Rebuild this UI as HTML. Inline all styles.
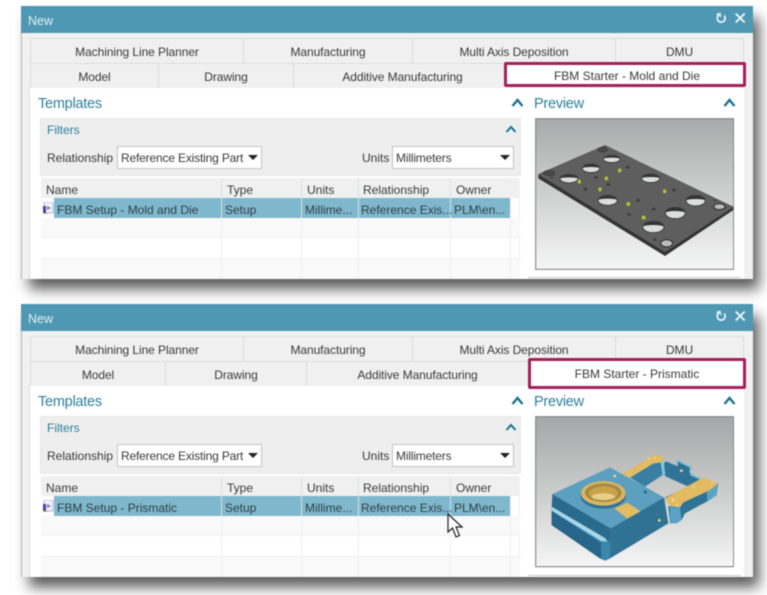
<!DOCTYPE html>
<html><head><meta charset="utf-8"><style>
html,body{margin:0;padding:0;background:#fff}
#p{position:relative;width:767px;height:595px;overflow:hidden;background:#fff;font-family:"Liberation Sans",sans-serif;font-size:12px;color:#3a3a3a;filter:blur(.4px)}
.d{position:absolute;left:0;width:767px;height:273px}
.d div,.d svg,.d span{position:absolute}
.w{left:21px;top:6px;width:732px;height:273px;background:#f1f1f1;box-shadow:7px 11px 13px -1px rgba(0,0,0,.65)}
.edge{left:21px;top:33px;width:1px;height:246px;background:#b5b5b5}
.tb{left:21px;top:6px;width:732px;height:27px;background:#4f98b3}
.tt{left:28px;top:14px;color:#e2f1f5;font-size:12.5px;line-height:14px}
.tab{height:24px;background:#f0f0f0;border:1px solid #dcdcdc;border-bottom:0;text-align:center;line-height:26px;white-space:nowrap;letter-spacing:-.08px}
.pn{left:29px;top:88px;width:715px;height:191px;background:#fff;border-left:1px solid #ddd;box-sizing:border-box}
.sel{background:#fff;border:3px solid #a3205c;box-sizing:border-box;text-align:center;border-radius:2px;white-space:nowrap}
.h{color:#2c7f9c;font-size:14.5px;line-height:18px;top:95px;letter-spacing:-.25px}
.f{left:40px;top:118px;width:481px;height:58px;background:#eee;border:1px solid #e8e8e8;box-sizing:border-box}
.l{line-height:14px;white-space:nowrap}
.s{top:146px;height:23px;background:#fff;border:1px solid #c4c4c4;box-sizing:border-box;line-height:22px;padding-left:3px;white-space:nowrap;letter-spacing:-.17px}
.ar{width:0;height:0;border-left:5px solid transparent;border-right:5px solid transparent;border-top:5px solid #222}
.t{left:41px;top:178px;width:479px;height:101px;background:#fff;border-right:1px solid #eee;box-sizing:border-box}
.hd{left:41px;top:178px;width:479px;height:20px;background:#f0f0f0}
.r{left:54px;top:198px;width:456px;height:20px;background:#7fb8cc}
.r1{left:41px;top:218px;width:479px;height:20px;background:#f9f9f9;border-bottom:1px solid #f0f0f0;box-sizing:border-box}
.r2{left:41px;top:258px;width:479px;height:21px;background:#f9f9f9;border-top:1px solid #f0f0f0;box-sizing:border-box}
.v{top:178px;width:1px;height:101px;background:#efefef}
.vw{top:178px;width:1px;height:40px;background:#d8e2e6}
.c{top:203px;line-height:14px;color:#2f3f46;white-space:nowrap}
.hc{top:183px;line-height:14px;white-space:nowrap;color:#3a3a3a}
.bl{left:528px;top:277px;width:213px;height:1px;background:#ccc}
</style></head><body><div id="p">

<div class="d" style="top:0">
<div class="w"></div><div class="edge"></div><div class="tb"></div><div class="tt">New</div>
<svg style="left:714px;top:11px" width="34" height="14" viewBox="0 0 34 14" fill="none" stroke="#eef7f9" stroke-width="1.700"><path d="M5 3.800A4 4 0 1 0 10.200 4.500"/><path d="M2.500 3.500L6 2.500 6.500 6" stroke-width="1.300"/><path d="M21.700 2.500l9 9M30.700 2.500l-9 9" stroke-width="1.900"/></svg>

<div class="tab" style="left:30px;top:38px;width:212px">Machining Line Planner</div>
<div class="tab" style="left:243px;top:38px;width:168px">Manufacturing</div>
<div class="tab" style="left:412px;top:38px;width:202px">Multi Axis Deposition</div>
<div class="tab" style="left:615px;top:38px;width:127px">DMU</div>
<div class="tab" style="left:30px;top:63px;width:127px">Model</div>
<div class="tab" style="left:158px;top:63px;width:134px">Drawing</div>
<div class="tab" style="left:293px;top:63px;width:217px">Additive Manufacturing</div>
<div class="pn"></div>
<div class="sel" style="left:504px;top:62px;width:242px;height:25px;line-height:22px;padding-left:4px">FBM Starter - Mold and Die</div>

<div class="h" style="left:38px">Templates</div>
<svg style="left:511px;top:97px" width="14" height="11" fill="none" stroke="#1c7391" stroke-width="2.400"><path d="M1.500 9L6.500 3l5 6"/></svg>
<div class="h" style="left:534px">Preview</div>
<svg style="left:723px;top:97px" width="14" height="11" fill="none" stroke="#1c7391" stroke-width="2.400"><path d="M1.500 9L6.500 3l5 6"/></svg>
<div class="f"></div>
<div class="l" style="left:47px;top:123px;color:#2c7f9c">Filters</div>
<svg style="left:505px;top:124px" width="12" height="10" fill="none" stroke="#1c7391" stroke-width="2"><path d="M1.500 8L6 3l4.500 5"/></svg>
<div class="l" style="left:47px;top:151px">Relationship</div>
<div class="s" style="left:117px;width:145px">Reference Existing Part</div><div class="ar" style="left:248px;top:155px"></div>
<div class="l" style="left:362px;top:151px">Units</div>
<div class="s" style="left:392px;width:122px">Millimeters</div><div class="ar" style="left:500px;top:155px"></div>

<div class="t"></div><div class="hd"></div><div class="r"></div><div class="r1"></div><div class="r2"></div>
<div class="v" style="left:221px"></div><div class="v" style="left:301px"></div><div class="v" style="left:358px"></div><div class="v" style="left:450px"></div><div class="v" style="left:510px"></div>
<div class="vw" style="left:221px"></div><div class="vw" style="left:301px"></div><div class="vw" style="left:358px"></div><div class="vw" style="left:450px"></div>
<div class="hc" style="left:46px">Name</div><div class="hc" style="left:227px">Type</div><div class="hc" style="left:307px">Units</div><div class="hc" style="left:363px">Relationship</div><div class="hc" style="left:456px">Owner</div>
<svg style="left:42px;top:202px" width="12" height="14"><rect x="2" y="0" width="9" height="11" fill="#eef0fa" stroke="#9a9ad0" stroke-width=".7"/><rect x="1" y="4" width="3" height="7" fill="#5040a0"/><path d="M5 4l4 2-4 2z" fill="#7a7a9a"/><rect x="1" y="11" width="5" height="1" fill="#d8c040"/></svg>
<div class="c" style="left:57px">FBM Setup - Mold and Die</div><div class="c" style="left:225px">Setup</div><div class="c" style="left:305px">Millime...</div><div class="c" style="left:361px">Reference Exis...</div><div class="c" style="left:454px">PLM\en...</div>

<svg style="left:535px;top:118px" width="199" height="152" viewBox="45 24 597 456">
<defs><linearGradient id="g1" x1="0" y1="0" x2="0" y2="1"><stop offset="0" stop-color="#a9aaab"/><stop offset=".5" stop-color="#cfd0d0"/><stop offset="1" stop-color="#f6f6f6"/></linearGradient></defs>
<rect x="47" y="26" width="594" height="452" fill="url(#g1)" stroke="#7c7c7c" stroke-width="3"/>
<path d="M55 192V205L435 438 640 300V290L435 425Z" fill="#343434"/>
<path d="M255 105L640 290 435 425 55 192Z" fill="#5e5e5e"/>
<g fill="#dcdddd" stroke="#3f3f3f" stroke-width="3">
<ellipse cx="275" cy="147" rx="25" ry="11"/><ellipse cx="213" cy="175" rx="26" ry="13"/><ellipse cx="147" cy="206" rx="27" ry="13"/><ellipse cx="392" cy="205" rx="27" ry="13"/><ellipse cx="263" cy="271" rx="29" ry="15"/><ellipse cx="527" cy="272" rx="29" ry="16"/><ellipse cx="466" cy="309" rx="30" ry="17"/><ellipse cx="400" cy="351" rx="32" ry="17"/>
</g>
<g fill="#333"><path d="M250 147a25 11 0 0 1 50 0 25 4 0 0 0-50 0z"/><path d="M187 175a26 13 0 0 1 52 0 26 4 0 0 0-52 0z"/><path d="M120 206a27 13 0 0 1 54 0 27 4 0 0 0-54 0z"/><path d="M365 205a27 13 0 0 1 54 0 27 4 0 0 0-54 0z"/><path d="M234 271a29 15 0 0 1 58 0 29 5 0 0 0-58 0z"/><path d="M498 272a29 16 0 0 1 58 0 29 5 0 0 0-58 0z"/><path d="M436 309a30 17 0 0 1 60 0 30 6 0 0 0-60 0z"/><path d="M368 351a32 17 0 0 1 64 0 32 6 0 0 0-64 0z"/></g>
<g fill="#4a4a4a" stroke="#333" stroke-width="2"><ellipse cx="248" cy="119" rx="14" ry="7"/><ellipse cx="87" cy="189" rx="17" ry="8"/></g>
<g fill="#bbb" stroke="#333" stroke-width="3.500"><ellipse cx="598" cy="290" rx="17" ry="9"/><ellipse cx="440" cy="400" rx="18" ry="11"/></g>
<g fill="#b9c232"><ellipse cx="299" cy="181" rx="5" ry="6"/><ellipse cx="178" cy="215" rx="5" ry="6"/><ellipse cx="259" cy="205" rx="5" ry="6"/><ellipse cx="240" cy="238" rx="5" ry="6"/><ellipse cx="434" cy="244" rx="5" ry="6"/><ellipse cx="325" cy="282" rx="6" ry="6"/><ellipse cx="371" cy="323" rx="6" ry="6"/></g>
<g fill="#3c3c3c"><ellipse cx="323" cy="172" rx="6" ry="4"/><ellipse cx="228" cy="202" rx="6" ry="4"/><ellipse cx="265" cy="223" rx="6" ry="4"/><ellipse cx="196" cy="237" rx="6" ry="4"/><ellipse cx="462" cy="240" rx="6" ry="4"/><ellipse cx="354" cy="271" rx="6" ry="4"/><ellipse cx="401" cy="297" rx="6" ry="4"/><ellipse cx="327" cy="313" rx="6" ry="4"/><ellipse cx="404" cy="389" rx="5" ry="4"/><ellipse cx="95" cy="203" rx="4" ry="3"/><ellipse cx="585" cy="272" rx="4" ry="3"/></g>
</svg>
<div class="bl"></div>
</div>

<div class="d" style="top:298px">
<div class="w"></div><div class="edge"></div><div class="tb"></div><div class="tt">New</div>
<svg style="left:714px;top:11px" width="34" height="14" viewBox="0 0 34 14" fill="none" stroke="#eef7f9" stroke-width="1.700"><path d="M5 3.800A4 4 0 1 0 10.200 4.500"/><path d="M2.500 3.500L6 2.500 6.500 6" stroke-width="1.300"/><path d="M21.700 2.500l9 9M30.700 2.500l-9 9" stroke-width="1.900"/></svg>

<div class="tab" style="left:30px;top:38px;width:212px">Machining Line Planner</div>
<div class="tab" style="left:243px;top:38px;width:168px">Manufacturing</div>
<div class="tab" style="left:412px;top:38px;width:202px">Multi Axis Deposition</div>
<div class="tab" style="left:615px;top:38px;width:127px">DMU</div>
<div class="tab" style="left:30px;top:63px;width:134px">Model</div>
<div class="tab" style="left:165px;top:63px;width:140px">Drawing</div>
<div class="tab" style="left:306px;top:63px;width:221px">Additive Manufacturing</div>
<div class="pn"></div>
<div class="sel" style="left:528px;top:60px;width:218px;height:31px;line-height:27px">FBM Starter - Prismatic</div>

<div class="h" style="left:38px">Templates</div>
<svg style="left:511px;top:97px" width="14" height="11" fill="none" stroke="#1c7391" stroke-width="2.400"><path d="M1.500 9L6.500 3l5 6"/></svg>
<div class="h" style="left:534px">Preview</div>
<svg style="left:723px;top:97px" width="14" height="11" fill="none" stroke="#1c7391" stroke-width="2.400"><path d="M1.500 9L6.500 3l5 6"/></svg>
<div class="f"></div>
<div class="l" style="left:47px;top:123px;color:#2c7f9c">Filters</div>
<svg style="left:505px;top:124px" width="12" height="10" fill="none" stroke="#1c7391" stroke-width="2"><path d="M1.500 8L6 3l4.500 5"/></svg>
<div class="l" style="left:47px;top:151px">Relationship</div>
<div class="s" style="left:117px;width:145px">Reference Existing Part</div><div class="ar" style="left:248px;top:155px"></div>
<div class="l" style="left:362px;top:151px">Units</div>
<div class="s" style="left:392px;width:122px">Millimeters</div><div class="ar" style="left:500px;top:155px"></div>

<div class="t"></div><div class="hd"></div><div class="r"></div><div class="r1"></div><div class="r2"></div>
<div class="v" style="left:221px"></div><div class="v" style="left:301px"></div><div class="v" style="left:358px"></div><div class="v" style="left:450px"></div><div class="v" style="left:510px"></div>
<div class="vw" style="left:221px"></div><div class="vw" style="left:301px"></div><div class="vw" style="left:358px"></div><div class="vw" style="left:450px"></div>
<div class="hc" style="left:46px">Name</div><div class="hc" style="left:227px">Type</div><div class="hc" style="left:307px">Units</div><div class="hc" style="left:363px">Relationship</div><div class="hc" style="left:456px">Owner</div>
<svg style="left:42px;top:202px" width="12" height="14"><rect x="2" y="0" width="9" height="11" fill="#eef0fa" stroke="#9a9ad0" stroke-width=".7"/><rect x="1" y="4" width="3" height="7" fill="#5040a0"/><path d="M5 4l4 2-4 2z" fill="#7a7a9a"/><rect x="1" y="11" width="5" height="1" fill="#d8c040"/></svg>
<div class="c" style="left:57px">FBM Setup - Prismatic</div><div class="c" style="left:225px">Setup</div><div class="c" style="left:305px">Millime...</div><div class="c" style="left:361px">Reference Exis...</div><div class="c" style="left:454px">PLM\en...</div>

<svg style="left:535px;top:118px" width="199" height="152" viewBox="45 18 597 456">
<defs><linearGradient id="g2" x1="0" y1="0" x2="0" y2="1"><stop offset="0" stop-color="#a6a7a8"/><stop offset=".5" stop-color="#cbcccc"/><stop offset="1" stop-color="#f6f6f6"/></linearGradient></defs>
<rect x="47" y="20" width="594" height="450" fill="url(#g2)" stroke="#7c7c7c" stroke-width="3"/>
<!-- inner wall under upper arm -->
<path d="M330 203L400 160 422 157 428 195 375 230Z" fill="#3a7fa3"/>
<!-- rear wall -->
<path d="M422 157L435 153 468 167 470 148 515 170 512 190 545 205 505 230 428 195Z" fill="#2f7497"/>
<path d="M422 157L435 150 440 152 432 160 436 198 428 195Z" fill="#8cc6dc"/>
<path d="M468 167L470 148 515 170 512 190 508 188 510 173 474 155 473 170Z" fill="#8cc6dc"/>
<path d="M512 190L545 205 540 209 510 195Z" fill="#8cc6dc"/>
<!-- upper arm -->
<path d="M300 190L320 185 385 145 405 133 435 143 422 157 400 160 330 203Z" fill="#e2bb62"/>
<!-- lower arm side walls -->
<path d="M490 277L570 240 595 220 590 255 560 275 495 310 485 330 450 340 445 290Z" fill="#2f7497"/>
<path d="M450 290L480 292 485 330 470 340 450 340Z" fill="#5aa3c4"/>
<path d="M560 240L595 220 590 255 562 275Z" fill="#5aa3c4"/>
<!-- lower arm top -->
<path d="M435 262L505 230 545 205 550 202 435 268Z" fill="#3a7fa3"/>
<path d="M435 265L550 202 595 220 570 240 490 277 480 292 450 288Z" fill="#e2bb62"/>
<!-- block faces -->
<path d="M272 355L432 262 445 340 270 445Z" fill="#2f7294"/>
<path d="M97 252L272 355 270 445 255 452 240 445 95 345V290Z" fill="#2a6a8d"/>
<path d="M95 290L255 384 268 395 270 445 255 452 245 447 242 398 95 305Z" fill="#3a87ad"/>
<path d="M95 303V345L240 445 244 400Z" fill="#27658a"/>
<path d="M95 290L255 384 262 394 245 394 95 302Z" fill="#a6d6e8"/>
<path d="M97 252L270 172 432 262 272 355Z" fill="#5c9fbf"/>
<path d="M283 295L322 278 362 304 322 326Z" fill="#e2bb62"/>
<ellipse cx="250" cy="258" rx="68" ry="38" fill="#2f7294"/>
<ellipse cx="250" cy="250" rx="67" ry="37" fill="#d8b565"/>
<ellipse cx="250" cy="248" rx="55" ry="28" fill="#a68a3f"/>
<ellipse cx="250" cy="250" rx="44" ry="21" fill="#c9a24c"/>
<ellipse cx="250" cy="260" rx="35" ry="10" fill="#e8cf88"/>
<g fill="#f0dc96"><circle cx="284" cy="198" r="4"/><circle cx="385" cy="145" r="3"/><circle cx="405" cy="143" r="3"/><circle cx="418" cy="331" r="4"/><circle cx="484" cy="182" r="4"/><circle cx="522" cy="232" r="3"/><circle cx="459" cy="270" r="4"/><circle cx="470" cy="286" r="3"/><circle cx="577" cy="218" r="3"/></g>
<circle cx="376" cy="246" r="5" fill="#2a6a8d"/>
</svg>
<div class="bl"></div>
</div>

<svg style="position:absolute;left:446px;top:513px" width="18" height="26" viewBox="0 0 18 26"><path d="M2 1V19L6.500 15 10 24 13.500 22.500 10 14H16Z" fill="#fff" stroke="#222" stroke-width="1.200"/></svg>
</div></body></html>
